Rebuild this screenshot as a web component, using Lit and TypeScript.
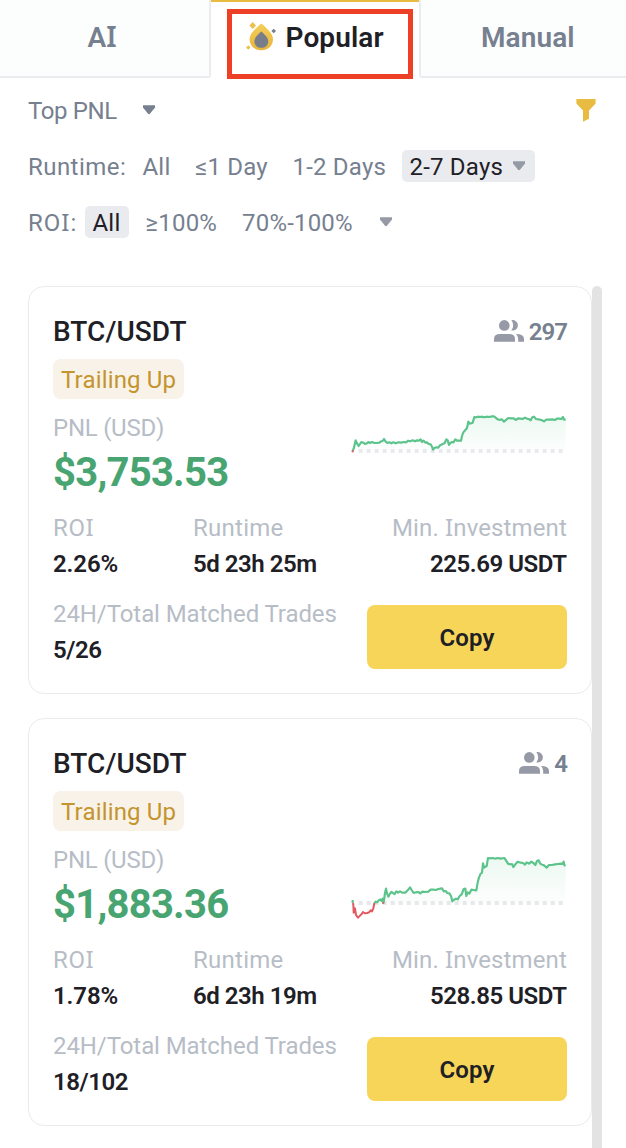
import { LitElement, html, css, svg } from "lit";
import { customElement, property } from "lit/decorators.js";

interface Chart {
  top: number;
  base: number;
  dots: string;
  gains: string[];
  losses: string[];
}

interface Strategy {
  pair: string;
  copiers: string;
  pnl: string;
  roi: string;
  runtime: string;
  investment: string;
  trades: string;
  chart: Chart;
}

/* Capital I is set in a face whose I carries slab serifs. */
const slab = (text: string) => {
  const [before, ...rest] = text.split("I");
  return html`${before}${rest.map((part) => html`<span class="slab">I</span>${part}`)}`;
};

const caret = html`<svg class="caret" viewBox="0 0 12 10">
  <path d="M0 .3H12V2.6L7.2 8.6Q6 10 4.8 8.6L0 2.6Z" fill="currentColor" />
</svg>`;

const strategies: Strategy[] = [
  {
    pair: "BTC/USDT", copiers: "297", pnl: "$3,753.53", roi: "2.26%",
    runtime: "5d 23h 25m", investment: "225.69 USDT", trades: "5/26",
    chart: {
      top: -3, base: 153, dots: "#e9e9ee",
      gains: ["39,153 42,146 48,121 52,130 57,138 61,132 65,126 71,128 76,132 82,130 86,126 91,129 97,126 104,129 111,129 119,128 124,124 129,123 133,117 138,125 143,129 149,127 155,130 161,127 168,130 176,127 184,128 191,126 200,127 205,122 212,124 219,121 226,124 232,121 238,122 243,118 247,126 252,122 257,128 262,127 267,132 273,133 277,140 280,149 284,144 290,142 296,143 301,136 308,133 315,129 320,118 324,121 328,135 332,129 337,126 342,127 347,118 352,122 364,122 367,108 371,97 377,90 382,84 386,65 390,71 399,68 404,51 409,52 415,50 421,51 428,50 434,52 441,50 449,51 457,49 463,49 468,53 474,58 480,60 486,58 493,65 500,59 506,54 514,55 522,55 529,60 535,55 543,56 549,57 556,53 563,56 569,58 573,61 578,52 583,50 589,57 597,58 605,60 613,64 620,59 629,59 638,58 646,60 652,56 659,56 665,57 670,51 673,59 678,59"],
      losses: ["36,154 42,154"],
    },
  },
  {
    pair: "BTC/USDT", copiers: "4", pnl: "$1,883.36", roi: "1.78%",
    runtime: "6d 23h 19m", investment: "528.85 USDT", trades: "18/102",
    chart: {
      top: -27, base: 189, dots: "#e6e8ea",
      gains: [
        "39,189 39,180",
        "104,189 108,185 112,187 117,181 122,178 126,183 129,176 131,189 133,181 136,159 139,146 142,160 146,170 149,164 155,156 160,159 165,162 170,154 175,158 181,154 188,158 197,158 204,151 211,142 216,150 222,159 229,157 236,156 242,160 248,155 257,156 266,155 273,149 281,149 288,150 296,147 302,146 307,145 312,154 318,153 323,159 329,160 334,168 338,184 343,179 349,176 354,178 360,168 366,163 372,147 377,146 380,168 384,157 389,161 395,149 402,150 410,151 414,128 418,112 423,101 427,98 430,70 433,83 441,78 445,54 452,55 460,54 467,56 475,54 483,56 494,54 499,61 505,71 510,73 517,72 521,81 527,73 534,65 543,68 550,69 556,74 561,67 568,71 575,65 581,69 587,75 592,63 597,61 602,71 607,74 613,76 621,83 628,75 637,75 646,73 655,72 663,71 668,72 672,65 674,76 678,76",
      ],
      losses: [
        "40,189 41,195 42,218 46,205 49,225 55,233 61,227 66,222 70,216 76,220 83,219 88,217 93,211 97,214 101,205 104,189",
        "130,187 132,191",
      ],
    },
  },
];

@customElement("strategy-card")
export class StrategyCard extends LitElement {
  @property({ attribute: false }) item!: Strategy;

  static styles = css`
    :host {
      display: block;
      box-sizing: border-box;
      height: 408px;
      padding: 24px;
      border: 1px solid #ebebec;
      border-radius: 16px;
      color: #1e2026;
    }
    .head { display: flex; justify-content: space-between; height: 40px; line-height: 41px; }
    .pair { font-size: 28px; font-weight: 500; letter-spacing: 0.05px; }
    .copiers {
      display: flex; align-items: center; gap: 5px;
      font-weight: 600; letter-spacing: -1px; color: #76808f;
    }
    .copiers span { line-height: 40px; padding-top: 2px; }
    .people { width: 30px; height: 22px; }
    .badge {
      display: block; width: fit-content; height: 40px; line-height: 42px;
      margin-top: 8px; padding: 0 8px; box-sizing: border-box; min-width: 131px;
      border-radius: 8px; background: #f8f2e8; color: #c4942f; letter-spacing: 0.16px;
    }
    .profit { display: flex; justify-content: space-between; height: 101px; }
    .profit-text { padding-top: 11px; white-space: nowrap; }
    .label { line-height: 36px; color: #b7bdc6; letter-spacing: 0.25px; }
    .label .slab { font-family: "Noto Sans", sans-serif; line-height: 0; }
    .profit .label { letter-spacing: -0.25px; }
    .pnl { font-size: 40px; font-weight: 700; line-height: 54px; letter-spacing: -0.75px; color: #48a571; }
    .chart { width: 220px; height: 101px; flex: none; }
    .stats { display: grid; grid-template-columns: 140px 1fr auto; margin-top: 10px; }
    .value { line-height: 36px; font-weight: 600; letter-spacing: -0.45px; }
    .value.percent { letter-spacing: -0.1px; }
    .roi { letter-spacing: 0.6px; }
    .right { text-align: right; }
    .right .label { letter-spacing: 0.13px; }
    .right .value { letter-spacing: -0.45px; margin-right: 0.5px; }
    .foot { display: flex; justify-content: space-between; margin-top: 14px; white-space: nowrap; }
    .foot .label { letter-spacing: -0.08px; }
    button {
      width: 200px; height: 64px; margin: 9px 0 0; padding: 2px 0 0; border: 0;
      border-radius: 8px; background: #f7d559; color: #1e2026;
      font: 600 24px Roboto, sans-serif; letter-spacing: 0.1px;
    }
  `;

  private renderChart() {
    const { top, base, gains, losses, dots } = this.item.chart;
    const main = gains[gains.length - 1];
    const startX = main.split(",")[0];
    return html`<svg class="chart" viewBox="22 ${top} 660 303">
      <defs>
        <linearGradient id="area" x1="0" y1="0" x2="0" y2="1">
          <stop offset="0" stop-color="#5cc48b" stop-opacity=".11" />
          <stop offset="1" stop-color="#5cc48b" stop-opacity=".015" />
        </linearGradient>
      </defs>
      <polygon points="${main} 678,${base} ${startX},${base}" fill="url(#area)" />
      <path d="M57 ${base}H675" stroke=${dots} stroke-width="12" stroke-dasharray="12 12" />
      ${gains.map((points) => svg`
        <polyline points=${points} fill="none" stroke="#5cc48b" stroke-width="6.5" stroke-linejoin="round" />`)}
      ${losses.map((points) => svg`
        <polyline points=${points} fill="none" stroke="#e4585f" stroke-width="6" stroke-linejoin="round" />`)}
    </svg>`;
  }

  render() {
    const s = this.item;
    return html`
      <div class="head">
        <span class="pair">${s.pair}</span>
        <div class="copiers">
          <svg class="people" viewBox="0 0 30 22" fill="#969aa6">
            <circle cx="10.3" cy="5.4" r="5.3" />
            <path d="M0 21.8V19Q0 14 6 14H15Q21 14 21 19V21.8Z" />
            <path d="M17.3 .3A5.2 5.2 0 1 1 17.3 10.3Q19.2 8.6 19.2 5.3T17.3 .3Z" />
            <path d="M22 14Q30 14 30 19V21.8H24.2V19Q24.2 16 22 14Z" />
          </svg>
          <span>${s.copiers}</span>
        </div>
      </div>
      <span class="badge">Trailing Up</span>
      <div class="profit">
        <div class="profit-text">
          <div class="label">PNL (USD)</div>
          <div class="pnl">${s.pnl}</div>
        </div>
        ${this.renderChart()}
      </div>
      <div class="stats">
        <div><div class="label roi">${slab("ROI")}</div><div class="value percent">${s.roi}</div></div>
        <div><div class="label">Runtime</div><div class="value">${s.runtime}</div></div>
        <div class="right"><div class="label">${slab("Min. Investment")}</div><div class="value">${s.investment}</div></div>
      </div>
      <div class="foot">
        <div><div class="label">24H/Total Matched Trades</div><div class="value">${s.trades}</div></div>
        <button>Copy</button>
      </div>
    `;
  }
}

@customElement("app-root")
export class AppRoot extends LitElement {
  static styles = css`
    :host {
      display: flex; flex-direction: column; box-sizing: border-box;
      height: 1148px; overflow: hidden; background: #fff;
      font: 400 24px Roboto, "Noto Sans", sans-serif; color: #76808f;
      white-space: nowrap;
    }
    .tabs {
      display: grid; grid-template-columns: 211px 208px 1fr; height: 78px; flex: none;
      font-size: 28px; font-weight: 600; line-height: 75px; letter-spacing: 0.1px;
    }
    .tab {
      box-sizing: border-box; background: #fcfdfd; border-bottom: 2px solid #eaecef;
    }
    .ai { border-right: 2px solid #eaecef; padding-left: 87.5px; border-bottom-right-radius: 3px; }
    .manual { border-left: 2px solid #eaecef; padding-left: 60px; border-bottom-left-radius: 3px; }
    .active {
      position: relative; box-sizing: border-box; display: flex; align-items: flex-start;
      border-top: 2px solid #e8bb41; padding-left: 34px; color: #1e2026; line-height: 71px;
    }
    .flame { width: 34px; height: 34px; margin: 17px 6.5px 0 0; }
    .highlight {
      position: absolute; left: 16px; top: 7px; width: 186px; height: 70px;
      box-sizing: border-box; border: 5px solid #ee4027;
    }
    .slab { font-family: "Noto Sans", sans-serif; line-height: 0; }
    .sort { display: flex; align-items: center; height: 34px; margin: 16px 30px 0 28px; flex: none; }
    .sort .name { letter-spacing: -0.4px; margin-right: 26.5px; }
    .caret { width: 12px; height: 10px; color: #969aa6; }
    .sort .caret { color: #76808f; margin-bottom: 2px; }
    .funnel { width: 20px; height: 23px; margin: 0 0 1px auto; }
    .filter {
      display: grid; grid-template-rows: 32px; align-items: start; flex: none;
      margin: 22px 0 0 28px; line-height: 34px; letter-spacing: 0.2px;
    }
    .filter .caret { margin-top: 11px; }
    .runtime { grid-template-columns: 114.5px 52.5px 97.5px 109.5px 133px; }
    .runtime .name { letter-spacing: 0.45px; }
    .roi { grid-template-columns: 57px 60.5px 96.5px 138px 12px; margin-top: 24px; }
    .roi .name { letter-spacing: 1px; }
    .chip {
      display: flex; align-items: flex-start; justify-content: space-between;
      height: 32px; padding: 0 10px 0 7.5px; box-sizing: border-box; border-radius: 5px;
      background: #eaebef; color: #1e2026;
    }
    .wide { width: 133px; }
    .small { width: 44px; }
    .results { display: grid; grid-template-columns: 564px 10px; margin: 48px 0 0 28px; flex: 1; min-height: 0; }
    .cards { display: flex; flex-direction: column; gap: 24px; }
    .scrollbar { background: #e3e3e3; border-radius: 5px 5px 0 0; }
  `;

  render() {
    return html`
      <nav class="tabs">
        <div class="tab ai">${slab("AI")}</div>
        <div class="active">
          <svg class="flame" viewBox="0 0 34 34">
            <defs>
              <linearGradient id="gold" x1="0" y1="0" x2="0" y2="1">
                <stop offset="0" stop-color="#f3cf58" /><stop offset="1" stop-color="#e8b43c" />
              </linearGradient>
            </defs>
            <path d="M16.3 4.6C21 8.6 28 14.6 28 20.2C28 26.6 23 31.2 16.3 31.2C9.6 31.2 4.6 26.6 4.6 20.2C4.6 14.6 11.6 8.6 16.3 4.6Z" fill="url(#gold)" />
            <path d="M16.3 12.6C19.5 15.4 23.2 18.8 23.2 22.4C23.2 26.2 20.2 28.8 16.3 28.8C12.4 28.8 9.4 26.2 9.4 22.4C9.4 18.8 13.1 15.4 16.3 12.6Z" fill="#777d8b" />
            <path d="M7.7 3L11 6.5L7.7 10L4.4 6.5ZM3.3 26.2L5.5 28.5L3.3 30.8L1.1 28.5Z" fill="#ebc04c" />
            <path d="M28.7 9.7L31 12L28.7 14.3L26.4 12Z" fill="#777d8b" />
          </svg>
          <span>Popular</span>
          <div class="highlight"></div>
        </div>
        <div class="tab manual">Manual</div>
      </nav>
      <div class="sort">
        <span class="name">Top PNL</span>${caret}
        <svg class="funnel" viewBox="0 0 20 23">
          <path d="M.4 0H19.6V4.6L13 11.5V19.8L7 22.7V11.5L.4 4.6Z" fill="#e8bb41" />
        </svg>
      </div>
      <div class="filter runtime">
        <span class="name">Runtime:</span><span>All</span><span>≤1 Day</span><span>1-2 Days</span>
        <span class="chip wide">2-7 Days ${caret}</span>
      </div>
      <div class="filter roi">
        <span class="name">${slab("ROI:")}</span><span class="chip small">All</span>
        <span>≥100%</span><span>70%-100%</span>${caret}
      </div>
      <div class="results">
        <div class="cards">
          ${strategies.map((item) => html`<strategy-card .item=${item}></strategy-card>`)}
        </div>
        <div class="scrollbar"></div>
      </div>
    `;
  }
}
